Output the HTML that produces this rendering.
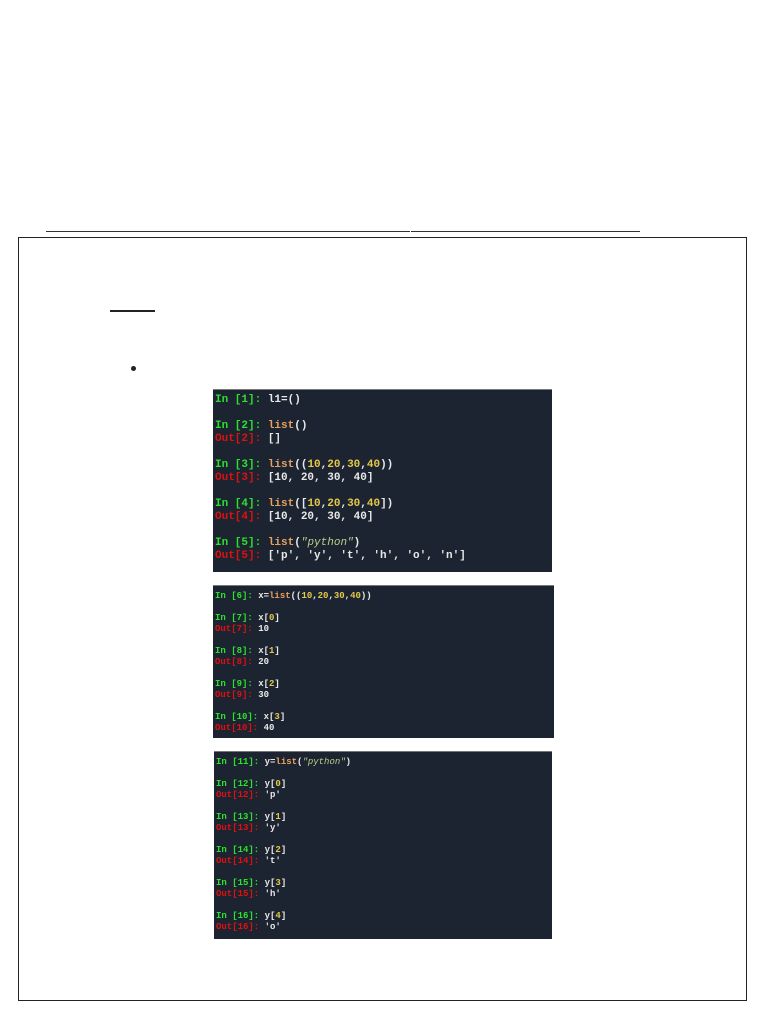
<!DOCTYPE html>
<html><head><style>
body{margin:0;width:768px;height:1024px;background:#fff;position:relative;overflow:hidden;font-family:"Liberation Mono",monospace}
.a{position:absolute}
.p{position:absolute;background:#1b2430;border-top:1px solid #777;white-space:pre;font-weight:bold;color:#e8e8e8}
.g{color:#2ee02e}.r{color:#e01010}.o{color:#e8a060}.y{color:#e6c84a}.s{color:#b8d08a;font-style:italic;font-weight:normal}
.l{position:absolute;left:2px}
</style></head><body>
<div class="a" style="left:46px;top:231px;width:364px;height:1px;background:#333"></div>
<div class="a" style="left:411px;top:231px;width:229px;height:1px;background:#333"></div>
<div class="a" style="left:18px;top:237px;width:727px;height:762px;border:1px solid #222"></div>
<div class="a" style="left:110px;top:310px;width:45px;height:2px;background:#222"></div>
<div class="a" style="left:131px;top:366px;width:5px;height:5px;border-radius:50%;background:#222"></div>

<div class="p" style="left:213px;top:389px;width:339px;height:182px;font-size:11px;line-height:13px">
<div class="l" style="top:4px"><span class="g">In [1]:</span> l1=()</div>
<div class="l" style="top:30px"><span class="g">In [2]:</span> <span class="o">list</span>()</div>
<div class="l" style="top:43px"><span class="r">Out[2]:</span> []</div>
<div class="l" style="top:69px"><span class="g">In [3]:</span> <span class="o">list</span>((<span class="y">10</span>,<span class="y">20</span>,<span class="y">30</span>,<span class="y">40</span>))</div>
<div class="l" style="top:82px"><span class="r">Out[3]:</span> [10, 20, 30, 40]</div>
<div class="l" style="top:108px"><span class="g">In [4]:</span> <span class="o">list</span>([<span class="y">10</span>,<span class="y">20</span>,<span class="y">30</span>,<span class="y">40</span>])</div>
<div class="l" style="top:121px"><span class="r">Out[4]:</span> [10, 20, 30, 40]</div>
<div class="l" style="top:147px"><span class="g">In [5]:</span> <span class="o">list</span>(<span class="s">"python"</span>)</div>
<div class="l" style="top:160px"><span class="r">Out[5]:</span> ['p', 'y', 't', 'h', 'o', 'n']</div>
</div>

<div class="p" style="left:213px;top:585px;width:341px;height:152px;font-size:9px;line-height:11px">
<div class="l" style="top:5px"><span class="g">In [6]:</span> x=<span class="o">list</span>((<span class="y">10</span>,<span class="y">20</span>,<span class="y">30</span>,<span class="y">40</span>))</div>
<div class="l" style="top:27px"><span class="g">In [7]:</span> x[<span class="y">0</span>]</div>
<div class="l" style="top:38px"><span class="r">Out[7]:</span> 10</div>
<div class="l" style="top:60px"><span class="g">In [8]:</span> x[<span class="y">1</span>]</div>
<div class="l" style="top:71px"><span class="r">Out[8]:</span> 20</div>
<div class="l" style="top:93px"><span class="g">In [9]:</span> x[<span class="y">2</span>]</div>
<div class="l" style="top:104px"><span class="r">Out[9]:</span> 30</div>
<div class="l" style="top:126px"><span class="g">In [10]:</span> x[<span class="y">3</span>]</div>
<div class="l" style="top:137px"><span class="r">Out[10]:</span> 40</div>
</div>

<div class="p" style="left:214px;top:751px;width:338px;height:187px;font-size:9px;line-height:11px">
<div class="l" style="top:5px"><span class="g">In [11]:</span> y=<span class="o">list</span>(<span class="s">"python"</span>)</div>
<div class="l" style="top:27px"><span class="g">In [12]:</span> y[<span class="y">0</span>]</div>
<div class="l" style="top:38px"><span class="r">Out[12]:</span> 'p'</div>
<div class="l" style="top:60px"><span class="g">In [13]:</span> y[<span class="y">1</span>]</div>
<div class="l" style="top:71px"><span class="r">Out[13]:</span> 'y'</div>
<div class="l" style="top:93px"><span class="g">In [14]:</span> y[<span class="y">2</span>]</div>
<div class="l" style="top:104px"><span class="r">Out[14]:</span> 't'</div>
<div class="l" style="top:126px"><span class="g">In [15]:</span> y[<span class="y">3</span>]</div>
<div class="l" style="top:137px"><span class="r">Out[15]:</span> 'h'</div>
<div class="l" style="top:159px"><span class="g">In [16]:</span> y[<span class="y">4</span>]</div>
<div class="l" style="top:170px"><span class="r">Out[16]:</span> 'o'</div>
</div>
</body></html>
